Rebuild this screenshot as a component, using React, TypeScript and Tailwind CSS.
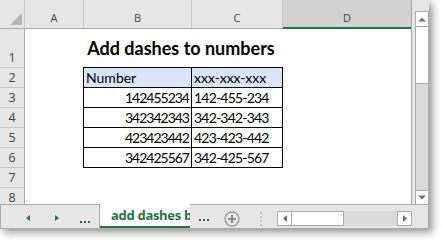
import React from "react";

const rows: [string, string][] = [
  ["142455234", "142-455-234"],
  ["342342343", "342-342-343"],
  ["423423442", "423-423-442"],
  ["342425567", "342-425-567"],
];

const rowHeights = [39, 20, 20, 20, 20, 20, 20, 20];

function Dots({ color }: { color: string }) {
  return (
    <div className="flex gap-[2px]">
      <div className={`w-[2px] h-[2px] ${color}`} />
      <div className={`w-[2px] h-[2px] ${color}`} />
      <div className={`w-[2px] h-[2px] ${color}`} />
    </div>
  );
}

export default function App() {
  return (
    <div className="w-[442px] h-[241px] bg-white overflow-hidden">
      <div
        className="w-[429px] h-[229px] bg-[#e6e6e6] flex flex-col shadow-[3px_3px_8px_rgba(0,0,0,0.45)]"
        style={{ fontFamily: "Lato, 'Open Sans', sans-serif" }}
      >
        {/* top area */}
        <div className="h-[204px] flex">
          {/* grid */}
          <div className="w-[412px] flex flex-col border-r border-[#a6a6a6]">
            {/* column headers */}
            <div
              className="h-[29px] flex border-b border-[#ababab] bg-[#e6e6e6] text-[11px] text-[#444]"
              style={{ fontFamily: "'Open Sans', sans-serif" }}
            >
              <div className="w-[25px] border-r border-[#c6c6c6]">
                <svg width="24" height="28" viewBox="0 0 24 28">
                  <polygon points="22,13 22,25 10,25" fill="#b4b4b4" />
                </svg>
              </div>
              <div className="w-[59px] border-r border-[#c6c6c6] flex items-end justify-center pb-[5px] leading-none">A</div>
              <div className="w-[108px] border-r border-[#c6c6c6] flex items-end justify-center pb-[5px] leading-none">B</div>
              <div className="w-[91px] border-r border-[#c6c6c6] flex items-end justify-center pb-[5px] leading-none">C</div>
              <div className="flex-1 -mb-px bg-[#d2d2d2] border-b-2 border-[#217346] flex items-end justify-center pb-[4px] leading-none text-[#2f4f3a]">D</div>
            </div>
            {/* body */}
            <div className="flex-1 flex overflow-hidden">
              <div
                className="w-[25px] flex flex-col bg-[#e6e6e6] border-r border-[#ababab] text-[12.5px] text-[#444]"
                style={{ fontFamily: "'Open Sans', sans-serif" }}
              >
                {rowHeights.map((h, i) => (
                  <div
                    key={i}
                    className="shrink-0 border-b border-[#c6c6c6] flex items-end justify-center leading-none pb-[3px]"
                    style={{ height: h }}
                  >
                    {i + 1}
                  </div>
                ))}
              </div>
              <div className="flex-1 bg-white flex flex-col">
                <div className="h-[38px] shrink-0 pl-[58px]">
                  <div className="w-[200px] flex justify-center pt-[10px] text-[18px] font-bold leading-none text-black pr-[4px]">
                    Add dashes to numbers
                  </div>
                </div>
                <div className="ml-[58px] w-[200px] border-l border-t border-black text-[14px] text-black">
                  <div className="h-[20px] flex bg-[#dae4fa]">
                    <div className="w-[108px] border-r border-b border-black pl-[2px] leading-[19px]">Number</div>
                    <div className="w-[91px] border-r border-b border-black pl-[2px] leading-[19px]">xxx-xxx-xxx</div>
                  </div>
                  {rows.map(([a, b]) => (
                    <div key={a} className="h-[20px] flex">
                      <div className="w-[108px] border-r border-b border-black pr-[2px] text-right leading-[19px] tracking-[-1px]">{a}</div>
                      <div className="w-[91px] border-r border-b border-black pl-[2px] leading-[19px] tracking-[-0.8px]">{b}</div>
                    </div>
                  ))}
                </div>
              </div>
            </div>
          </div>
          {/* gap */}
          <div className="w-[3px]" />
          {/* vertical scrollbar */}
          <div className="w-[14px] pt-[11px] flex flex-col">
            <div className="flex-1 flex flex-col border-x border-[#ababab]">
              <div className="h-[16px] bg-white border-y border-[#ababab] flex items-center justify-center">
                <svg width="8" height="5" viewBox="0 0 8 5">
                  <polygon points="0,4.5 8,4.5 4,0.5" fill="#707070" />
                </svg>
              </div>
              <div className="h-[57px] bg-white border-b border-[#ababab]" />
              <div className="flex-1 bg-[#dadada]" />
              <div className="h-[14px] bg-white border-t border-[#ababab] flex items-center justify-center">
                <svg width="8" height="5" viewBox="0 0 8 5">
                  <polygon points="0,0.5 8,0.5 4,4.5" fill="#707070" />
                </svg>
              </div>
            </div>
          </div>
        </div>
        {/* bottom bar */}
        <div className="h-[25px] flex border-b border-[#ababab]">
          <div className="w-[100px] border-t border-l border-r border-[#ababab] flex items-center pl-[25px]">
            <svg width="4" height="6" viewBox="0 0 4 6" className="mt-[3px]">
              <polygon points="4,0 4,6 0,3" fill="#217346" />
            </svg>
            <svg width="4" height="6" viewBox="0 0 4 6" className="mt-[3px] ml-[25px]">
              <polygon points="0,0 0,6 4,3" fill="#217346" />
            </svg>
            <div className="ml-[21px] mt-[10px]">
              <Dots color="bg-[#217346]" />
            </div>
          </div>
          <div className="w-[90px] h-[24px] bg-white border-b-2 border-[#217346] overflow-hidden whitespace-nowrap pl-[11px]">
            <div
              className="text-[13px] font-bold text-[#217346] leading-[22px] tracking-[-0.3px]"
              style={{ fontFamily: "'Open Sans', sans-serif" }}
            >
              add dashes b
            </div>
          </div>
          <div className="flex-1 border-t border-r border-[#ababab] flex items-start">
            <div className="ml-[9px] mt-[14px]">
              <Dots color="bg-[#217346]" />
            </div>
            <svg width="16" height="16" viewBox="0 0 16 16" className="ml-[15px] mt-[6px]">
              <circle cx="8" cy="8" r="7" fill="none" stroke="#9a9a9a" strokeWidth="1.3" />
              <path d="M8 4v8M4 8h8" stroke="#7a7a7a" strokeWidth="1.6" />
            </svg>
            <div className="ml-[20px] mt-[7px] flex flex-col gap-[2px]">
              <div className="w-[2px] h-[2px] bg-[#c4c4c4]" />
              <div className="w-[2px] h-[2px] bg-[#c4c4c4]" />
              <div className="w-[2px] h-[2px] bg-[#c4c4c4]" />
              <div className="w-[2px] h-[2px] bg-[#c4c4c4]" />
            </div>
            <div className="ml-[15px] mt-[6px] h-[15px] flex">
              <div className="w-[15px] bg-white border border-[#ababab] flex items-center justify-center">
                <svg width="4" height="7" viewBox="0 0 4 7">
                  <polygon points="4,0 4,7 0,3.5" fill="#707070" />
                </svg>
              </div>
              <div className="w-[52px] bg-white border-y border-r border-[#ababab]" />
              <div className="w-[53px] bg-[#dadada]" />
              <div className="w-[15px] bg-white border border-[#ababab] flex items-center justify-center">
                <svg width="4" height="7" viewBox="0 0 4 7">
                  <polygon points="0,0 0,7 4,3.5" fill="#707070" />
                </svg>
              </div>
            </div>
          </div>
        </div>
      </div>
    </div>
  );
}
